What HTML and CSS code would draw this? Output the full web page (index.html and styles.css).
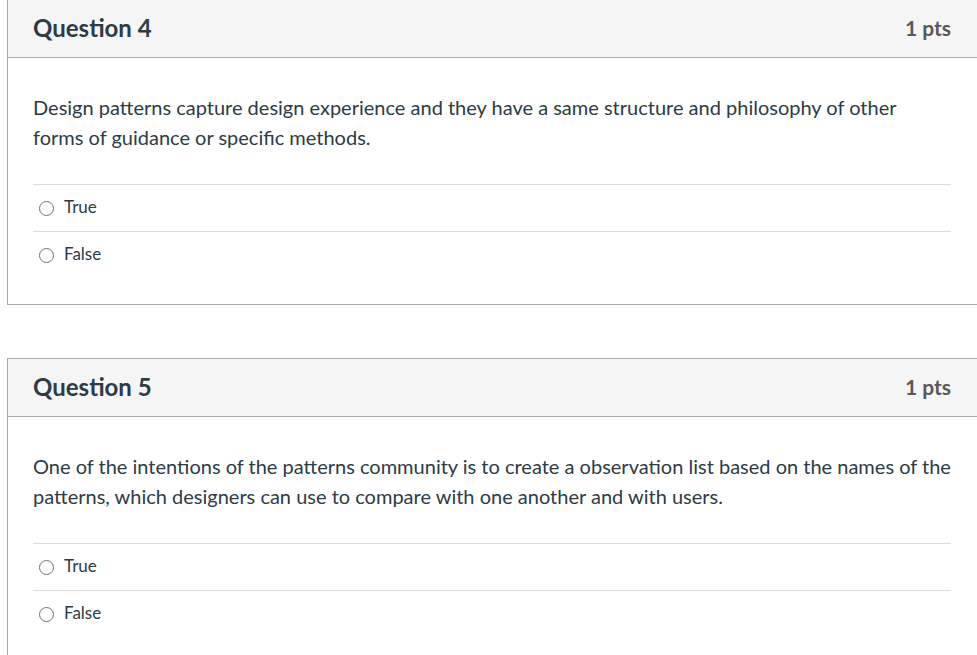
FILE: index.html
```html
<!DOCTYPE html>
<html lang="en">
<head>
<meta charset="utf-8">
<title>Quiz</title>
<link rel="stylesheet" href="styles.css">
</head>
<body>
<main class="page">
  <section class="question">
    <header class="q-header">
      <h2 class="q-title">Question 4</h2>
      <span class="q-points">1 pts</span>
    </header>
    <div class="q-body">
      <p class="q-text">Design patterns capture design experience and they have a same structure and philosophy of other forms of guidance or specific methods.</p>
      <ul class="answers">
        <li class="answer"><span class="radio"></span><span class="label">True</span></li>
        <li class="answer"><span class="radio"></span><span class="label">False</span></li>
      </ul>
    </div>
  </section>
  <section class="question">
    <header class="q-header">
      <h2 class="q-title">Question 5</h2>
      <span class="q-points">1 pts</span>
    </header>
    <div class="q-body">
      <p class="q-text">One of the intentions of the patterns community is to create a observation list based on the names of the patterns, which designers can use to compare with one another and with users.</p>
      <ul class="answers">
        <li class="answer"><span class="radio"></span><span class="label">True</span></li>
        <li class="answer"><span class="radio"></span><span class="label">False</span></li>
      </ul>
    </div>
  </section>
</main>
</body>
</html>
```
FILE: styles.css
```css
html, body {
  margin: 0;
  padding: 0;
  background: #ffffff;
}
body {
  font-family: Lato, "Noto Sans", sans-serif;
  color: #2d3b45;
  overflow: hidden;
}
.page {
  padding-left: 7px;
  margin-top: -1px;
  display: flex;
  flex-direction: column;
  gap: 53px;
}
.question {
  border: 1px solid #a9a9a9;
  border-right: none;
  background: #fff;
}
.q-header {
  height: 58px;
  box-sizing: border-box;
  background: #f5f5f5;
  border-bottom: 1px solid #a9a9a9;
  display: flex;
  align-items: center;
  justify-content: space-between;
  padding: 0 26px 3px 25px;
}
.q-title {
  margin: 0;
  font-size: 24px;
  font-weight: 700;
  color: #2d3b45;
}
.q-points {
  font-size: 21px;
  font-weight: 700;
  color: #595959;
}
.q-body {
  padding: 34px 26px 26px 25px;
}
.q-text {
  margin: 0;
  font-size: 20px;
  line-height: 30px;
}
.answers {
  list-style: none;
  margin: 32px 0 0;
  padding: 0;
}
.answer {
  height: 47px;
  box-sizing: border-box;
  border-top: 1px solid #dcdcdc;
  display: flex;
  align-items: center;
  gap: 10px;
  padding: 0 0 2px 6px;
  font-size: 17px;
}
.radio {
  width: 15px;
  height: 15px;
  box-sizing: border-box;
  border: 1.5px solid #737373;
  border-radius: 50%;
  flex: none;
  position: relative;
  top: 1px;
}
.label {
  color: #2d3b45;
  position: relative;
  top: -1px;
}
```
